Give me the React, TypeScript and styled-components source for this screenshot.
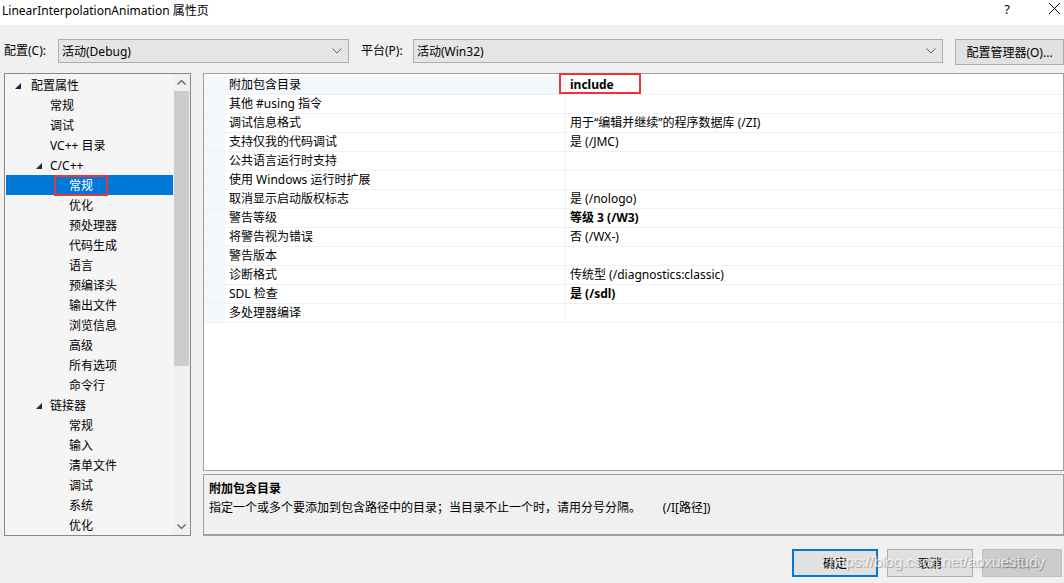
import React from "react";
import styled, { createGlobalStyle } from "styled-components";

const GlobalStyle = createGlobalStyle`
  html, body {
    margin: 0;
    padding: 0;
    background: #f0f0f0;
  }
  body {
    font-family: "Noto Sans", "Noto Sans CJK SC", sans-serif;
    font-size: 12px;
    color: #000;
  }
`;

const Dialog = styled.div`
  position: relative;
  width: 1064px;
  height: 583px;
  background: #f0f0f0;
  display: flex;
  flex-direction: column;
  overflow: hidden;
`;

const TitleBar = styled.div`
  height: 25px;
  background: #fff;
  display: flex;
  align-items: center;
  padding-left: 2px;
  font-size: 12px;
`;

const Title = styled.div`
  flex: 1;
  margin-top: -6px;
`;

const TitleButton = styled.div<{ $w: number }>`
  width: ${(p) => p.$w}px;
  height: 25px;
  display: flex;
  align-items: center;
  justify-content: center;
  margin-top: -8px;
  font-size: 13px;
`;

const ConfigRow = styled.div`
  height: 48px;
  display: flex;
  align-items: flex-start;
  padding: 14px 0 0 4px;
  box-sizing: border-box;
`;

const Label = styled.div<{ $w: number }>`
  width: ${(p) => p.$w}px;
  line-height: 24px;
`;

const Combo = styled.div<{ $w: number }>`
  width: ${(p) => p.$w}px;
  height: 24px;
  box-sizing: border-box;
  border: 1px solid #adadad;
  background: #e5e5e5;
  display: flex;
  align-items: center;
  padding: 0 6px 0 3px;
  margin-right: 12px;
  span {
    flex: 1;
  }
`;

const Button = styled.div<{ $w: number; $primary?: boolean; $disabled?: boolean }>`
  width: ${(p) => p.$w}px;
  height: 28px;
  box-sizing: border-box;
  display: flex;
  align-items: center;
  justify-content: center;
  background: ${(p) => (p.$disabled ? "#cccccc" : "#e1e1e1")};
  color: ${(p) => (p.$disabled ? "#a0a0a0" : "#000")};
  border: ${(p) => (p.$primary ? "2px solid #0078d7" : p.$disabled ? "1px solid #bfbfbf" : "1px solid #adadad")};
`;

const Main = styled.div`
  display: flex;
  gap: 12px;
  padding-left: 4px;
`;

const Tree = styled.div`
  width: 187px;
  height: 463px;
  box-sizing: border-box;
  border: 1px solid #828790;
  background: #f5f5f5;
  display: flex;
`;

const TreeList = styled.div`
  flex: 1;
  padding: 1px 0 0 1px;
`;

const TreeRow = styled.div<{ $level: number; $selected?: boolean }>`
  position: relative;
  height: 20px;
  display: flex;
  align-items: center;
  padding-left: ${(p) => 25 + p.$level * 19}px;
  background: ${(p) => (p.$selected ? "#0078d7" : "transparent")};
  color: ${(p) => (p.$selected ? "#fff" : "#000")};
`;

const Expander = styled.svg<{ $level: number }>`
  position: absolute;
  left: ${(p) => 9 + p.$level * 21}px;
  top: 8px;
`;

const Marked = styled.span`
  outline: 2px solid #e8363a;
  outline-offset: 0;
  padding: 0 13px;
  margin-left: -13px;
  line-height: 17px;
`;

const ScrollBar = styled.div`
  width: 17px;
  background: #f0f0f0;
  display: flex;
  flex-direction: column;
  align-items: center;
`;

const ScrollArrow = styled.div`
  height: 17px;
  width: 17px;
  display: flex;
  align-items: center;
  justify-content: center;
`;

const Thumb = styled.div`
  width: 15px;
  height: 275px;
  background: #cdcdcd;
`;

const RightColumn = styled.div`
  width: 861px;
  display: flex;
  flex-direction: column;
  gap: 3px;
`;

const Grid = styled.div`
  height: 398px;
  box-sizing: border-box;
  border: 1px solid #a0a0a0;
  background: #fff;
  display: flex;
  flex-direction: column;
  padding-top: 2px;
`;

const GridRow = styled.div<{ $first?: boolean }>`
  display: flex;
  height: 19px;
  box-sizing: border-box;
  border-bottom: 1px solid #eef1f6;
  background: ${(p) => (p.$first ? "#f4f7fc" : "#fff")};
`;

const Margin = styled.div`
  width: 21px;
  background: #f4f7fc;
`;

const NameCell = styled.div`
  width: 341px;
  padding-left: 4px;
  box-sizing: border-box;
  border-right: 1px solid #eef1f6;
  line-height: 18px;
`;

const ValueCell = styled.div<{ $bold?: boolean }>`
  position: relative;
  flex: 1;
  padding-left: 4px;
  line-height: 18px;
  font-weight: ${(p) => (p.$bold ? 700 : 400)};
  background: #fff;
`;

const RedBox = styled.div`
  position: absolute;
  left: -7px;
  top: -3px;
  width: 82px;
  height: 21px;
  box-sizing: border-box;
  border: 2px solid #e8363a;
`;

const Description = styled.div`
  height: 62px;
  box-sizing: border-box;
  border: 1px solid #a0a0a0;
  border-bottom: 2px solid #a0a0a0;
  background: #f0f0f0;
  padding: 4px 0 0 5px;
  line-height: 19px;
`;

const DescTitle = styled.div`
  font-weight: 700;
`;

const Footer = styled.div`
  display: flex;
  justify-content: flex-end;
  gap: 9px;
  padding: 13px 2px 0 0;
`;

const Watermark = styled.div`
  position: absolute;
  left: 829px;
  top: 553px;
  font-family: "Liberation Sans", Arial, sans-serif;
  font-size: 15.5px;
  letter-spacing: -0.2px;
  color: rgba(255, 255, 255, 0.7);
  text-shadow: 1px 1px 1px rgba(90, 90, 90, 0.5);
  pointer-events: none;
`;

const Chevron = () => (
  <svg width="10" height="6" viewBox="0 0 10 6">
    <path d="M0.5 0.5 L5 5 L9.5 0.5" fill="none" stroke="#606060" strokeWidth="1" />
  </svg>
);

type TreeItem = { label: string; level: number; expanded?: boolean; selected?: boolean };

const treeItems: TreeItem[] = [
  { label: "配置属性", level: 0, expanded: true },
  { label: "常规", level: 1 },
  { label: "调试", level: 1 },
  { label: "VC++ 目录", level: 1 },
  { label: "C/C++", level: 1, expanded: true },
  { label: "常规", level: 2, selected: true },
  { label: "优化", level: 2 },
  { label: "预处理器", level: 2 },
  { label: "代码生成", level: 2 },
  { label: "语言", level: 2 },
  { label: "预编译头", level: 2 },
  { label: "输出文件", level: 2 },
  { label: "浏览信息", level: 2 },
  { label: "高级", level: 2 },
  { label: "所有选项", level: 2 },
  { label: "命令行", level: 2 },
  { label: "链接器", level: 1, expanded: true },
  { label: "常规", level: 2 },
  { label: "输入", level: 2 },
  { label: "清单文件", level: 2 },
  { label: "调试", level: 2 },
  { label: "系统", level: 2 },
  { label: "优化", level: 2 },
];

type Prop = { name: string; value?: string; bold?: boolean };

const props: Prop[] = [
  { name: "附加包含目录", value: "include", bold: true },
  { name: "其他 #using 指令" },
  { name: "调试信息格式", value: "用于“编辑并继续”的程序数据库 (/ZI)" },
  { name: "支持仅我的代码调试", value: "是 (/JMC)" },
  { name: "公共语言运行时支持" },
  { name: "使用 Windows 运行时扩展" },
  { name: "取消显示启动版权标志", value: "是 (/nologo)" },
  { name: "警告等级", value: "等级 3 (/W3)", bold: true },
  { name: "将警告视为错误", value: "否 (/WX-)" },
  { name: "警告版本" },
  { name: "诊断格式", value: "传统型 (/diagnostics:classic)" },
  { name: "SDL 检查", value: "是 (/sdl)", bold: true },
  { name: "多处理器编译" },
];

export default function App() {
  return (
    <Dialog>
      <GlobalStyle />
      <TitleBar>
        <Title>LinearInterpolationAnimation 属性页</Title>
        <TitleButton $w={30}>?</TitleButton>
        <div style={{ width: 22 }} />
        <TitleButton $w={20}>
          <svg width="13" height="13" viewBox="0 0 13 13">
            <path d="M1 1 L12 12 M12 1 L1 12" stroke="#000" strokeWidth="1" />
          </svg>
        </TitleButton>
      </TitleBar>

      <ConfigRow>
        <Label $w={54}>配置(C):</Label>
        <Combo $w={291}>
          <span>活动(Debug)</span>
          <Chevron />
        </Combo>
        <Label $w={52}>平台(P):</Label>
        <Combo $w={530}>
          <span>活动(Win32)</span>
          <Chevron />
        </Combo>
        <Button $w={109} style={{ height: 26 }}>配置管理器(O)...</Button>
      </ConfigRow>

      <Main>
        <Tree>
          <TreeList>
            {treeItems.map((item, i) => (
              <TreeRow key={i} $level={item.level} $selected={item.selected}>
                {item.expanded && (
                  <Expander $level={item.level} width="6" height="6" viewBox="0 0 6 6">
                    <path d="M6 0 L6 6 L0 6 Z" fill="#262626" />
                  </Expander>
                )}
                {item.selected ? <Marked>{item.label}</Marked> : item.label}
              </TreeRow>
            ))}
          </TreeList>
          <ScrollBar>
            <ScrollArrow>
              <svg width="9" height="5" viewBox="0 0 9 5">
                <path d="M0.5 4.5 L4.5 0.5 L8.5 4.5" fill="none" stroke="#606060" strokeWidth="1.3" />
              </svg>
            </ScrollArrow>
            <Thumb />
            <div style={{ flex: 1 }} />
            <ScrollArrow>
              <svg width="9" height="5" viewBox="0 0 9 5">
                <path d="M0.5 0.5 L4.5 4.5 L8.5 0.5" fill="none" stroke="#606060" strokeWidth="1.3" />
              </svg>
            </ScrollArrow>
          </ScrollBar>
        </Tree>

        <RightColumn>
          <Grid>
            {props.map((p, i) => (
              <GridRow key={i} $first={i === 0}>
                <Margin />
                <NameCell>{p.name}</NameCell>
                <ValueCell $bold={p.bold}>
                  {p.value}
                  {i === 0 && <RedBox />}
                </ValueCell>
              </GridRow>
            ))}
          </Grid>
          <Description>
            <DescTitle>附加包含目录</DescTitle>
            <div>
              指定一个或多个要添加到包含路径中的目录；当目录不止一个时，请用分号分隔。&nbsp;&nbsp;&nbsp;&nbsp;&nbsp;&nbsp;&nbsp;(/I[路径])
            </div>
          </Description>
        </RightColumn>
      </Main>

      <Footer>
        <Button $w={86} $primary>确定</Button>
        <Button $w={86}>取消</Button>
        <Button $w={80} $disabled>应用(A)</Button>
      </Footer>

      <Watermark>https://blog.csdn.net/aoxuestudy</Watermark>
    </Dialog>
  );
}
